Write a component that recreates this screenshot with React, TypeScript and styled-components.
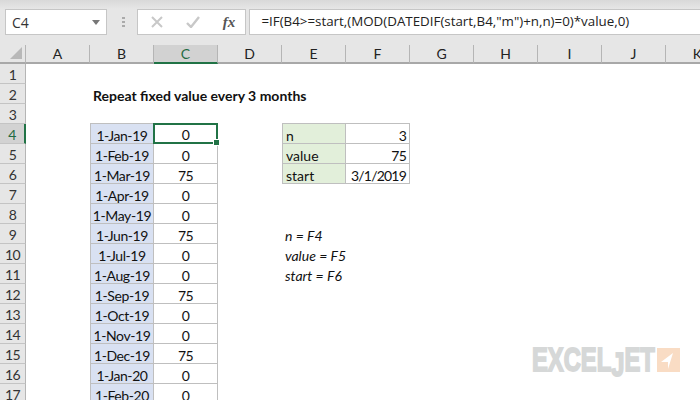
import { Fragment } from "react";
import styled, { createGlobalStyle } from "styled-components";

const GlobalStyle = createGlobalStyle`
  html, body {
    margin: 0;
    padding: 0;
    width: 700px;
    height: 400px;
    overflow: hidden;
    background: #fff;
  }
`;

const Page = styled.div`
  position: relative;
  width: 700px;
  height: 400px;
  overflow: hidden;
  display: flex;
  flex-direction: column;
  font-family: Lato, "Liberation Sans", sans-serif;
  color: #111;
`;

const FormulaBar = styled.div`
  height: 45px;
  flex: none;
  box-sizing: border-box;
  display: flex;
  align-items: flex-start;
  padding: 9px 0 0 5px;
  background: linear-gradient(#d9d9d9 0, #e6e6e6 9px, #e6e6e6 100%);
`;

const NameBox = styled.div`
  width: 102px;
  height: 26px;
  box-sizing: border-box;
  background: #fff;
  border: 1px solid #c6c6c6;
  display: flex;
  align-items: center;
  justify-content: space-between;
  padding: 0 6px 0 6px;
  font-family: "Open Sans", sans-serif;
  font-size: 14px;
  color: #333;
`;

const Caret = styled.span`
  width: 0;
  height: 0;
  border-left: 4px solid transparent;
  border-right: 4px solid transparent;
  border-top: 5px solid #777;
`;

const Grip = styled.div`
  width: 3px;
  height: 11px;
  margin: 8px 12px 0 15px;
  background: repeating-linear-gradient(#aaa 0, #aaa 2px, transparent 2px, transparent 4px);
`;

const ButtonBox = styled.div`
  width: 110px;
  height: 26px;
  box-sizing: border-box;
  background: #fff;
  border: 1px solid #c6c6c6;
  display: flex;
  align-items: center;
  padding-left: 13px;
  gap: 23px;
`;

const FxLabel = styled.span`
  font-family: "Liberation Serif", serif;
  font-style: italic;
  font-weight: bold;
  font-size: 15px;
  color: #555;
`;

const FormulaInput = styled.div`
  width: 452px;
  height: 26px;
  margin-left: 3px;
  box-sizing: border-box;
  background: #fff;
  border: 1px solid #c6c6c6;
  border-right: none;
  padding-left: 11px;
  line-height: 23px;
  font-family: "Open Sans", sans-serif;
  font-size: 13.35px;
  white-space: nowrap;
  overflow: hidden;
  color: #222;
`;

const Sheet = styled.div`
  display: grid;
  grid-template-columns: 26px repeat(11, 64px);
  grid-template-rows: 19px repeat(17, 20px);
  background: #fff;
`;

const Corner = styled.div`
  background: #e6e6e6;
  border-right: 1px solid #b5b5b5;
  border-bottom: 2px solid #a8a8a8;
  box-sizing: border-box;
  position: relative;

  &::after {
    content: "";
    position: absolute;
    right: 3px;
    bottom: 3px;
    width: 0;
    height: 0;
    border-left: 12px solid transparent;
    border-bottom: 12px solid #b8b8b8;
  }
`;

const ColHead = styled.div<{ $active?: boolean }>`
  box-sizing: border-box;
  display: flex;
  align-items: center;
  justify-content: center;
  font-size: 14px;
  background: ${({ $active }) => ($active ? "#d2d2d2" : "#e6e6e6")};
  color: ${({ $active }) => ($active ? "#1f6b43" : "#222")};
  border-right: 1px solid #b5b5b5;
  border-bottom: 2px solid ${({ $active }) => ($active ? "#217346" : "#a8a8a8")};
`;

const RowHead = styled.div<{ $active?: boolean; $row: number }>`
  grid-column: 1;
  grid-row: ${({ $row }) => $row + 1};
  box-sizing: border-box;
  display: flex;
  align-items: center;
  justify-content: center;
  padding-top: 1px;
  font-size: 14px;
  letter-spacing: -0.5px;
  background: ${({ $active }) => ($active ? "#d2d2d2" : "#e6e6e6")};
  color: ${({ $active }) => ($active ? "#1f6b43" : "#333")};
  border-bottom: 1px solid #c4c4c4;
  border-right: ${({ $active }) => ($active ? "2px solid #217346" : "1px solid #b5b5b5")};
`;

const Cell = styled.div<{ $col: number; $row: number; $span?: number }>`
  grid-column: ${({ $col, $span }) => `${$col} / span ${$span ?? 1}`};
  grid-row: ${({ $row }) => $row + 1};
  box-sizing: border-box;
  font-size: 14px;
  line-height: 23px;
  white-space: nowrap;
`;

const Title = styled(Cell)`
  font-weight: bold;
  padding-left: 3px;
`;

const DateCell = styled(Cell)`
  background: #d9e1f2;
  border: 1px solid #bfbfbf;
  margin-top: -1px;
  height: 21px;
  text-align: center;
  letter-spacing: -0.4px;
`;

const ValueCell = styled(Cell)<{ $selected?: boolean }>`
  position: relative;
  background: #fff;
  border: 1px solid #bfbfbf;
  border-left: none;
  margin-top: -1px;
  height: 21px;
  text-align: center;
  letter-spacing: -0.6px;
  ${({ $selected }) =>
    $selected &&
    `
    border: 2px solid #217346;
    margin: -1px 0 0 -1px;
    line-height: 20px;
    z-index: 2;
    &::after {
      content: "";
      position: absolute;
      right: -4px;
      bottom: -4px;
      width: 5px;
      height: 5px;
      background: #217346;
      border: 1px solid #fff;
    }
  `}
`;

const NameCell = styled(Cell)`
  background: #e2efda;
  border: 1px solid #bfbfbf;
  margin-top: -1px;
  height: 21px;
  padding-left: 3px;
`;

const NumberCell = styled(Cell)`
  background: #fff;
  border: 1px solid #bfbfbf;
  border-left: none;
  margin-top: -1px;
  height: 21px;
  text-align: right;
  padding-right: 3px;
  letter-spacing: -0.8px;
`;

const Note = styled(Cell)`
  font-style: italic;
  padding-left: 3px;
`;

const Logo = styled.div`
  position: absolute;
  left: 532px;
  top: 348px;
  display: flex;
  align-items: flex-start;
  gap: 2px;
`;

const LogoWord = styled.div`
  width: 123px;
  height: 24px;
`;

const LogoText = styled.span`
  display: block;
  width: 170px;
  font-family: "Liberation Sans", sans-serif;
  font-weight: bold;
  font-size: 33px;
  line-height: 24px;
  color: #d6d8d8;
  -webkit-text-stroke: 1.8px #d6d8d8;
  white-space: nowrap;
  transform: scaleX(0.72);
  transform-origin: left top;
`;

const LogoDrop = styled.span`
  position: relative;
  top: 5px;
`;

const columns = ["A", "B", "C", "D", "E", "F", "G", "H", "I", "J", "K"];

const dates = [
  ["1-Jan-19", "0"],
  ["1-Feb-19", "0"],
  ["1-Mar-19", "75"],
  ["1-Apr-19", "0"],
  ["1-May-19", "0"],
  ["1-Jun-19", "75"],
  ["1-Jul-19", "0"],
  ["1-Aug-19", "0"],
  ["1-Sep-19", "75"],
  ["1-Oct-19", "0"],
  ["1-Nov-19", "0"],
  ["1-Dec-19", "75"],
  ["1-Jan-20", "0"],
  ["1-Feb-20", "0"],
];

const named = [
  { row: 4, name: "n", value: "3" },
  { row: 5, name: "value", value: "75" },
  { row: 6, name: "start", value: "3/1/2019" },
];

const notes = [
  { row: 9, text: "n = F4" },
  { row: 10, text: "value = F5" },
  { row: 11, text: "start = F6" },
];

export default function App() {
  const rows = Array.from({ length: 17 }, (_, i) => i + 1);

  return (
    <Page>
      <GlobalStyle />
      <FormulaBar>
        <NameBox>
          C4
          <Caret />
        </NameBox>
        <Grip />
        <ButtonBox>
          <svg width="12" height="12" viewBox="0 0 12 12">
            <path d="M1 1 L11 11 M11 1 L1 11" stroke="#c8c8c8" strokeWidth="2" fill="none" />
          </svg>
          <svg width="14" height="12" viewBox="0 0 14 12">
            <path d="M1 7 L5 11 L13 1" stroke="#c8c8c8" strokeWidth="2.4" fill="none" />
          </svg>
          <FxLabel>fx</FxLabel>
        </ButtonBox>
        <FormulaInput>=IF(B4&gt;=start,(MOD(DATEDIF(start,B4,"m")+n,n)=0)*value,0)</FormulaInput>
      </FormulaBar>
      <Sheet>
        <Corner />
        {columns.map((c) => (
          <ColHead key={c} $active={c === "C"}>
            {c}
          </ColHead>
        ))}
        {rows.map((row) => (
          <RowHead key={row} $row={row} $active={row === 4}>
            {row}
          </RowHead>
        ))}
        <Title $col={3} $row={2} $span={5}>
          Repeat fixed value every 3 months
        </Title>
        {dates.map(([date, value], i) => (
          <Fragment key={date}>
            <DateCell $col={3} $row={i + 4}>
              {date}
            </DateCell>
            <ValueCell $col={4} $row={i + 4} $selected={i === 0}>
              {value}
            </ValueCell>
          </Fragment>
        ))}
        {named.map((item) => (
          <Fragment key={item.name}>
            <NameCell $col={6} $row={item.row}>
              {item.name}
            </NameCell>
            <NumberCell $col={7} $row={item.row}>
              {item.value}
            </NumberCell>
          </Fragment>
        ))}
        {notes.map((note) => (
          <Note key={note.row} $col={6} $row={note.row} $span={2}>
            {note.text}
          </Note>
        ))}
      </Sheet>
      <Logo>
        <LogoWord>
          <LogoText>
            EXCEL<LogoDrop>J</LogoDrop>ET
          </LogoText>
        </LogoWord>
        <svg width="23" height="24" viewBox="0 0 23 24">
          <rect width="23" height="24" fill="#f9dcc4" />
          <path d="M4 14 L16 5 L11 21 L11 14 Z" fill="#fff" />
        </svg>
      </Logo>
    </Page>
  );
}
